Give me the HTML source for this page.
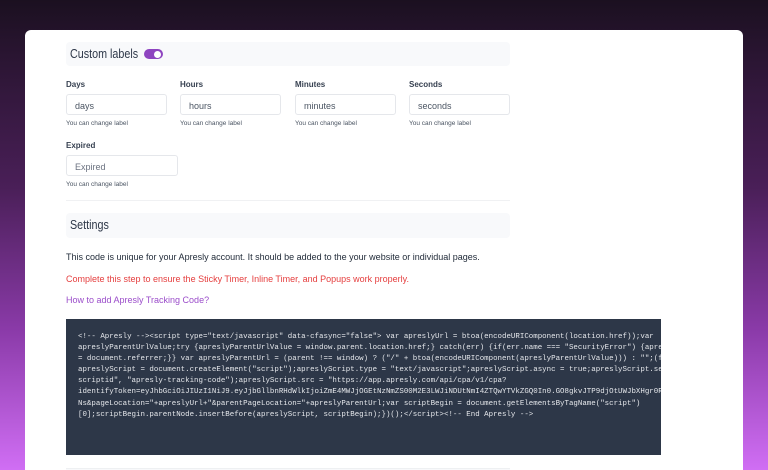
<!DOCTYPE html>
<html><head><style>
*{margin:0;padding:0;box-sizing:border-box}
html,body{width:768px;height:470px;overflow:hidden}
body{font-family:"Liberation Sans",sans-serif;background:linear-gradient(180deg,#1b1020 0%,#2a1532 12%,#4a1f58 40%,#8a3aa8 70%,#d06ef4 100%);position:relative}
.card{position:absolute;left:25px;top:30px;width:718px;height:440px;background:#fff;border-radius:6px 6px 0 0;overflow:hidden}
.abs{position:absolute}
.hdr{position:absolute;left:41px;width:444px;background:#f8f9fb;border-radius:4px;font-size:12.5px;color:#2d3748;padding-left:4px}
.hdr span{display:inline-block;transform:scaleX(0.86);transform-origin:left center}
.lbl{position:absolute;font-size:8px;font-weight:bold;color:#374151}
.inp{position:absolute;height:21px;border:1px solid #e5e7eb;border-radius:3px;font-size:9px;color:#4b5563;padding:6px 0 0 8px}
.help{position:absolute;font-size:6.5px;color:#4b5563}
.code{position:absolute;left:41px;top:289px;width:595px;height:136px;background:#2d3748;color:#e5e7eb;font-family:"Liberation Mono",monospace;font-size:7.45px;line-height:11.1px;padding:13px 0 0 12px;white-space:pre;overflow:hidden}
</style></head><body>
<div class="card">
<div class="hdr" style="top:12px;height:24px;line-height:24px"><span>Custom labels</span></div>
<div class="abs" style="left:119px;top:19px;width:19px;height:10px;border-radius:5px;background:#8e44c0"><div class="abs" style="left:10px;top:1.5px;width:7px;height:7px;border-radius:50%;background:#fff"></div></div>

<div class="lbl" style="left:41px;top:50px">Days</div>
<div class="lbl" style="left:155px;top:50px">Hours</div>
<div class="lbl" style="left:270px;top:50px">Minutes</div>
<div class="lbl" style="left:384px;top:50px">Seconds</div>
<div class="inp" style="left:41px;top:64px;width:101px">days</div>
<div class="inp" style="left:155px;top:64px;width:101px">hours</div>
<div class="inp" style="left:270px;top:64px;width:101px">minutes</div>
<div class="inp" style="left:384px;top:64px;width:101px">seconds</div>
<div class="help" style="left:41px;top:90px">You can change label</div>
<div class="help" style="left:155px;top:90px">You can change label</div>
<div class="help" style="left:270px;top:90px">You can change label</div>
<div class="help" style="left:384px;top:90px">You can change label</div>
<div class="lbl" style="left:41px;top:111px">Expired</div>
<div class="inp" style="left:41px;top:125px;width:112px;color:#6b7280">Expired</div>
<div class="help" style="left:41px;top:151px">You can change label</div>
<div class="abs" style="left:41px;top:170px;width:444px;height:1px;background:#f0f1f3"></div>

<div class="hdr" style="top:183px;height:25px;line-height:25px"><span>Settings</span></div>
<div class="abs" style="left:41px;top:222px;font-size:9px;color:#1f2937">This code is unique for your Apresly account. It should be added to the your website or individual pages.</div>
<div class="abs" style="left:41px;top:244px;font-size:9px;color:#e53e3e">Complete this step to ensure the Sticky Timer, Inline Timer, and Popups work properly.</div>
<div class="abs" style="left:41px;top:265px;font-size:9px;color:#9b4dca">How to add Apresly Tracking Code?</div>
<div class="code">&lt;!-- Apresly --&gt;&lt;script type="text/javascript" data-cfasync="false"&gt; var apreslyUrl = btoa(encodeURIComponent(location.href));var
apreslyParentUrlValue;try {apreslyParentUrlValue = window.parent.location.href;} catch(err) {if(err.name === "SecurityError") {apreslyParentUrlValue
= document.referrer;}} var apreslyParentUrl = (parent !== window) ? ("/" + btoa(encodeURIComponent(apreslyParentUrlValue))) : "";(function(){var
apreslyScript = document.createElement("script");apreslyScript.type = "text/javascript";apreslyScript.async = true;apreslyScript.setAttribute("data-
scriptid", "apresly-tracking-code");apreslyScript.src = "https://app.apresly.com/api/cpa/v1/cpa?
identifyToken=eyJhbGciOiJIUzI1NiJ9.eyJjbGllbnRHdWlkIjoiZmE4MWJjOGEtNzNmZS00M2E3LWJiNDUtNmI4ZTQwYTVkZGQ0In0.GO8gkvJTP9djOtUWJbXHgr0R
Ns&amp;pageLocation="+apreslyUrl+"&amp;parentPageLocation="+apreslyParentUrl;var scriptBegin = document.getElementsByTagName("script")
[0];scriptBegin.parentNode.insertBefore(apreslyScript, scriptBegin);})();&lt;/script&gt;&lt;!-- End Apresly --&gt;</div>
<div class="abs" style="left:41px;top:438px;width:444px;height:22px;background:#f8f9fb;border-top:1px solid #eef0f2"></div>
</div>
</body></html>
